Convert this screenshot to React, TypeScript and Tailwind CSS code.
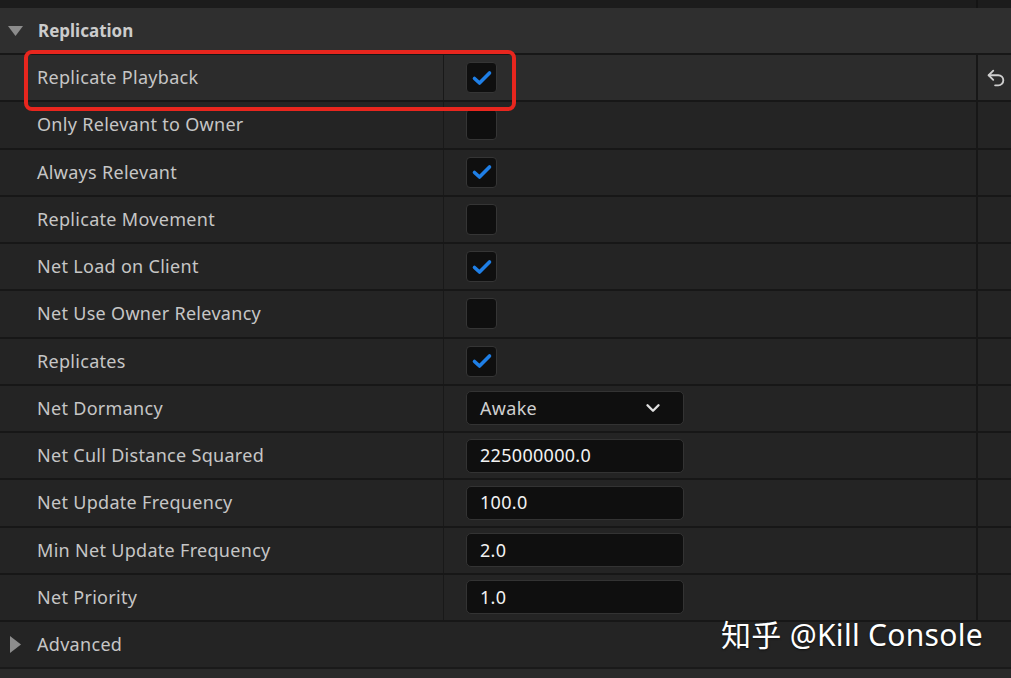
import { Undo2, ChevronDown } from 'lucide-react';

type Prop =
  | { name: string; kind: 'check'; value: boolean; reset?: boolean }
  | { name: string; kind: 'select'; value: string }
  | { name: string; kind: 'text'; value: string };

const props: Prop[] = [
  { name: 'Replicate Playback', kind: 'check', value: true, reset: true },
  { name: 'Only Relevant to Owner', kind: 'check', value: false },
  { name: 'Always Relevant', kind: 'check', value: true },
  { name: 'Replicate Movement', kind: 'check', value: false },
  { name: 'Net Load on Client', kind: 'check', value: true },
  { name: 'Net Use Owner Relevancy', kind: 'check', value: false },
  { name: 'Replicates', kind: 'check', value: true },
  { name: 'Net Dormancy', kind: 'select', value: 'Awake' },
  { name: 'Net Cull Distance Squared', kind: 'text', value: '225000000.0' },
  { name: 'Net Update Frequency', kind: 'text', value: '100.0' },
  { name: 'Min Net Update Frequency', kind: 'text', value: '2.0' },
  { name: 'Net Priority', kind: 'text', value: '1.0' },
];

function Checkbox({ checked }: { checked: boolean }) {
  return (
    <div className="w-[31px] h-[31px] rounded-[4px] bg-[#0f0f0f] border border-[#353535] flex items-center justify-center">
      {checked && (
        <svg width="22" height="18" viewBox="0 0 22 18">
          <path d="M3.5 9.5 L8.5 14 L18.5 4" fill="none" stroke="#1f7fe6" strokeWidth="3.6" strokeLinecap="round" strokeLinejoin="round" />
        </svg>
      )}
    </div>
  );
}

function Field({ p }: { p: Prop }) {
  if (p.kind === 'check') return <Checkbox checked={p.value} />;
  return (
    <div className="w-[218px] h-[34px] rounded-[5px] bg-[#0f0f0f] border border-[#333333] flex items-center px-[13px] text-[18px] tracking-[0.3px]">
      <span className={p.kind === 'text' ? 'text-[#f2f2f2]' : 'text-[#d0d0d0]'}>{p.value}</span>
      {p.kind === 'select' && <ChevronDown className="ml-auto mr-[6px] w-[22px] h-[22px] text-[#e0e0e0]" strokeWidth={2.6} />}
    </div>
  );
}

export default function App() {
  return (
    <div className="relative w-[1011px] h-[678px] overflow-hidden bg-[#242424] text-[#c6c6c6]" style={{ fontFamily: '"Noto Sans", Roboto, sans-serif' }}>
      <div className="h-[8px] flex bg-[#1c1c1c]">
        <div className="w-[978px] border-r-2 border-[#141414]" />
      </div>

      <div className="h-[45px] flex items-center bg-[#2f2f2f]">
        <svg className="ml-[8px] mr-[15px]" width="15" height="10" viewBox="0 0 15 10">
          <path d="M0 0 H15 L7.5 10 Z" fill="#8c8c8c" />
        </svg>
        <span className="text-[17px] font-bold text-[#cccccc]">Replication</span>
      </div>

      {props.map((p, i) => (
        <div key={p.name} className={`h-[47.25px] flex border-t-2 border-[#171717] ${i === 0 ? 'bg-[#2c2c2c]' : 'bg-[#242424]'}`}>
          <div className="w-[444px] flex items-center pl-[37px] border-r border-[#191919] text-[18px] tracking-[0.3px]">
            {p.name}
          </div>
          <div className="w-[534px] flex items-center pl-[22px] border-r-2 border-[#171717]">
            <Field p={p} />
          </div>
          <div className="flex-1 flex items-center justify-center pl-[3px]">
            {p.kind === 'check' && p.reset && <Undo2 className="w-[22px] h-[22px] text-[#cfcfcf]" strokeWidth={2} />}
          </div>
        </div>
      ))}

      <div className="h-[47.25px] flex items-center border-t-2 border-[#171717] bg-[#242424]">
        <svg className="ml-[10px] mr-[16px]" width="11" height="17" viewBox="0 0 11 17">
          <path d="M0 0 L11 8.5 L0 17 Z" fill="#8c8c8c" />
        </svg>
        <span className="text-[18px] tracking-[0.3px]">Advanced</span>
      </div>
      <div className="h-[12px] border-t-2 border-[#1a1a1a] bg-[#2a2a2a]" />

      <div className="absolute left-[24px] top-[50px] w-[492px] h-[61px] rounded-[8px] border-[4px] border-[#e8261e]" />

      <div
        className="absolute left-[721px] top-[620px] text-[30px] text-white leading-none tracking-[0.3px] [text-shadow:0_1px_2px_rgba(0,0,0,0.6)]"
        style={{ fontFamily: '"Noto Sans", "Noto Sans CJK SC", sans-serif' }}
      >
        知乎 @Kill Console
      </div>
    </div>
  );
}
